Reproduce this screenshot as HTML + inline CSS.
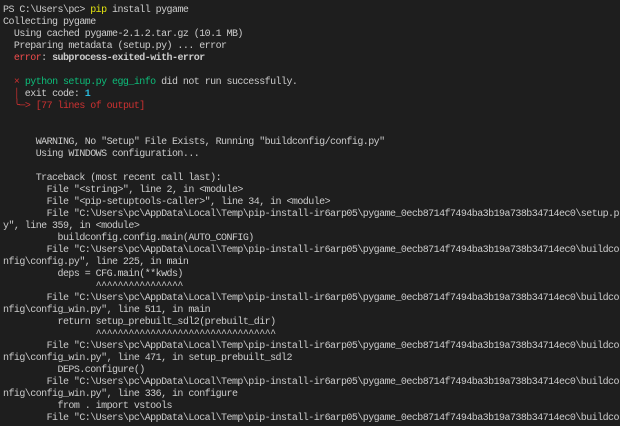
<!DOCTYPE html>
<html><head><meta charset="utf-8"><style>
html,body{margin:0;padding:0;background:#1e1e1e;width:620px;height:426px;overflow:hidden}
pre{margin:0;padding:5px 0 0 3px;font-family:"Liberation Mono","DejaVu Sans Mono",monospace;font-size:10px;letter-spacing:-0.55px;line-height:12px;color:#cccccc;white-space:pre}
.y{color:#e5e510}.r{color:#f14c4c}.dr{color:#cd3131}.g{color:#0dbc79}.c{color:#29b8db}.b{font-weight:bold}
</style></head><body><pre>PS C:\Users\pc&gt; <span class="y">pip</span> install pygame
Collecting pygame
  Using cached pygame-2.1.2.tar.gz (10.1 MB)
  Preparing metadata (setup.py) ... error
  <span class="r">error</span>: <span class="b">subprocess-exited-with-error</span>

  <span class="dr">×</span> <span class="g">python setup.py egg_info</span> did not run successfully.
  <span class="dr">│</span> exit code: <span class="c b">1</span>
  <span class="dr">╰─&gt; [77 lines of output]</span>


      WARNING, No "Setup" File Exists, Running "buildconfig/config.py"
      Using WINDOWS configuration...

      Traceback (most recent call last):
        File "&lt;string&gt;", line 2, in &lt;module&gt;
        File "&lt;pip-setuptools-caller&gt;", line 34, in &lt;module&gt;
        File "C:\Users\pc\AppData\Local\Temp\pip-install-ir6arp05\pygame_0ecb8714f7494ba3b19a738b34714ec0\setup.p
y", line 359, in &lt;module&gt;
          buildconfig.config.main(AUTO_CONFIG)
        File "C:\Users\pc\AppData\Local\Temp\pip-install-ir6arp05\pygame_0ecb8714f7494ba3b19a738b34714ec0\buildco
nfig\config.py", line 225, in main
          deps = CFG.main(**kwds)
                 ^^^^^^^^^^^^^^^^
        File "C:\Users\pc\AppData\Local\Temp\pip-install-ir6arp05\pygame_0ecb8714f7494ba3b19a738b34714ec0\buildco
nfig\config_win.py", line 511, in main
          return setup_prebuilt_sdl2(prebuilt_dir)
                 ^^^^^^^^^^^^^^^^^^^^^^^^^^^^^^^^^
        File "C:\Users\pc\AppData\Local\Temp\pip-install-ir6arp05\pygame_0ecb8714f7494ba3b19a738b34714ec0\buildco
nfig\config_win.py", line 471, in setup_prebuilt_sdl2
          DEPS.configure()
        File "C:\Users\pc\AppData\Local\Temp\pip-install-ir6arp05\pygame_0ecb8714f7494ba3b19a738b34714ec0\buildco
nfig\config_win.py", line 336, in configure
          from . import vstools
        File "C:\Users\pc\AppData\Local\Temp\pip-install-ir6arp05\pygame_0ecb8714f7494ba3b19a738b34714ec0\buildco</pre></body></html>
